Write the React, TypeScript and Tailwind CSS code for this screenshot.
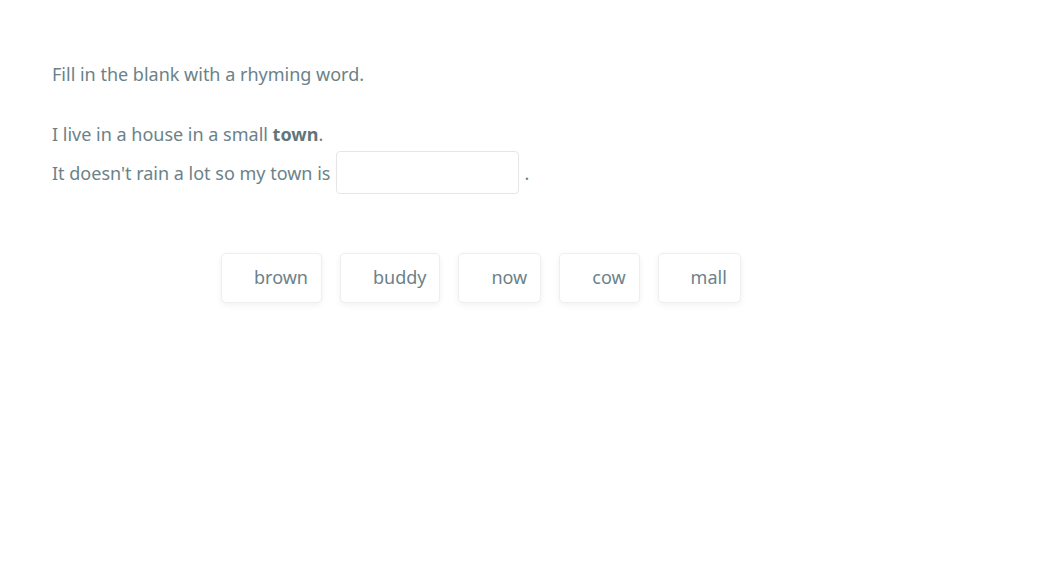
const words = ["brown", "buddy", "now", "cow", "mall"];

export default function App() {
  return (
    <div
      className="min-h-screen bg-white pl-[52px] pt-[62px] text-[18px] text-[#6b8288]"
      style={{ fontFamily: '"Noto Sans", sans-serif' }}
    >
      <p className="leading-6">Fill in the blank with a rhyming word.</p>
      <p className="mt-[36px] leading-6">
        I live in a house in a small <strong className="font-bold text-[#5f767c]">town</strong>.
      </p>
      <div className="mt-[5px] flex items-center leading-6">
        <span>It doesn't rain a lot so my town is</span>
        <div className="ml-[6px] h-[43px] w-[183px] rounded-[4px] border border-[#e3e7e9] bg-white" />
        <span className="ml-[5px]">.</span>
      </div>
      <div className="mt-[59px] ml-[169px] flex gap-[18px]">
        {words.map((w) => (
          <div
            key={w}
            className="flex h-[50px] items-center rounded-[5px] border border-[#eceff0] bg-white pl-[32px] pr-[13px] pb-[3px] leading-6 shadow-[0_2px_6px_rgba(0,0,0,0.06)]"
          >
            {w}
          </div>
        ))}
      </div>
    </div>
  );
}
